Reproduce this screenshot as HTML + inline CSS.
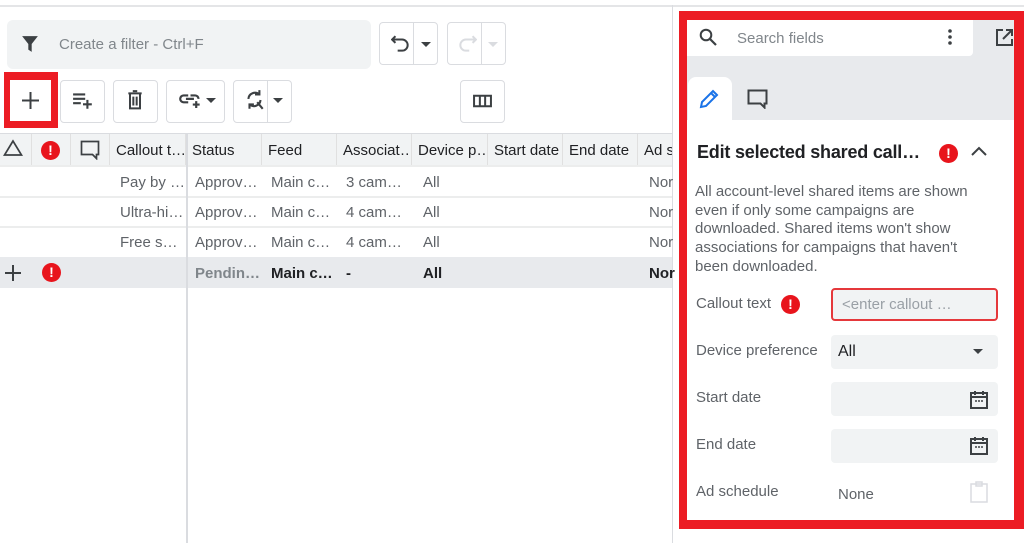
<!DOCTYPE html>
<html><head><meta charset="utf-8"><style>
*{box-sizing:border-box;margin:0;padding:0}
body{width:1024px;height:543px;overflow:hidden;background:#fff;font-family:"Liberation Sans",sans-serif;position:relative;color:#3c4043}
.a{position:absolute}
.btn{position:absolute;border:1px solid #dadce0;border-radius:4px;background:#fff}
.t{position:absolute;font-size:15px;white-space:nowrap}
.hd{position:absolute;top:134px;height:32px;background:#f1f3f4;border-right:1px solid #e0e0e0;font-size:15px;color:#202124;padding:8px 0 0 6px;white-space:nowrap;overflow:hidden}
.err{position:absolute;width:19px;height:19px;border-radius:50%;background:#e8141c;color:#fff;font-weight:bold;font-size:14px;text-align:center;line-height:19px}
.rl{position:absolute;left:0;width:672px;height:2px;background:#eceded}
.lab{position:absolute;left:696px;font-size:15px;color:#5f6368}
.fld{position:absolute;left:831px;width:167px;height:34px;background:#f1f3f4;border-radius:4px}
</style></head><body>
<div class="a" style="left:0;top:5px;width:1024px;height:2px;background:#e4e5e7"></div>
<div class="a" style="left:672px;top:5px;width:1px;height:538px;background:#dadce0"></div>
<!-- filter bar -->
<div class="a" style="left:7px;top:20px;width:364px;height:49px;background:#f1f3f4;border-radius:6px"></div>
<svg class="a" style="left:21px;top:35px" width="18" height="18" viewBox="0 0 16 16"><path d="M1 1h14l-5.5 7v7l-3-2V8z" fill="#3c4043"/></svg>
<div class="t" style="left:59px;top:36px;color:#80868b">Create a filter - Ctrl+F</div>
<svg class="a" style="left:449px;top:34px" width="20" height="20" viewBox="0 0 20 20"><circle cx="10" cy="10" r="8.5" fill="none" stroke="#3c4043" stroke-width="1.6"/><text x="10" y="15" font-size="13" text-anchor="middle" fill="#3c4043" font-family="Liberation Sans">?</text></svg>
<div class="btn" style="left:379px;top:22px;width:59px;height:43px"></div>
<div class="a" style="left:413px;top:23px;width:1px;height:41px;background:#dadce0"></div>
<svg class="a" style="left:391px;top:34px" width="20" height="20" viewBox="0 0 18 18"><path d="M4 2L1 5l3 3M1 5h9a5 5 0 0 1 0 10H6" fill="none" stroke="#3c4043" stroke-width="1.8"/></svg>
<div class="a" style="left:421px;top:42px;border:5px solid transparent;border-top:5px solid #3c4043"></div>
<div class="btn" style="left:447px;top:22px;width:59px;height:43px"></div>
<div class="a" style="left:481px;top:23px;width:1px;height:41px;background:#dadce0"></div>
<svg class="a" style="left:457px;top:34px" width="20" height="20" viewBox="0 0 18 18"><path d="M14 2l3 3-3 3M17 5H8a5 5 0 0 0 0 10h3" fill="none" stroke="#dadce0" stroke-width="1.8"/></svg>
<div class="a" style="left:488px;top:42px;border:5px solid transparent;border-top:5px solid #dadce0"></div>
<!-- toolbar -->
<div class="a" style="left:4px;top:72px;width:54px;height:56px;background:#ec1c24"></div>
<div class="a" style="left:10px;top:80px;width:41px;height:41px;background:#fff"></div>
<svg class="a" style="left:21px;top:91px" width="19" height="19" viewBox="0 0 19 19"><path d="M9.5 1v17M1 9.5h17" stroke="#3c4043" stroke-width="2"/></svg>
<div class="btn" style="left:60px;top:80px;width:45px;height:43px"></div>
<svg class="a" style="left:72px;top:91px" width="22" height="20" viewBox="0 0 20 18"><path d="M1 3h11M1 7h11M1 11h7M14 8v8M10 12h8" stroke="#3c4043" stroke-width="1.9" fill="none"/></svg>
<div class="btn" style="left:113px;top:80px;width:45px;height:43px"></div>
<svg class="a" style="left:127px;top:90px" width="16" height="20" viewBox="0 0 14 18"><path d="M1 3h12M5 1h4M2.5 3.5v13h9v-13M5.5 6v8M8.5 6v8" stroke="#3c4043" stroke-width="1.8" fill="none"/></svg>
<div class="btn" style="left:166px;top:80px;width:59px;height:43px"></div>
<svg class="a" style="left:179px;top:92px" width="23" height="16" viewBox="0 0 20 14"><path d="M8 3H4a3 3 0 0 0 0 6h4M10 3h4a3 3 0 0 1 3 3M6 6h7M15 8v6M12 11h6" stroke="#3c4043" stroke-width="1.9" fill="none"/></svg>
<div class="a" style="left:206px;top:98px;border:5px solid transparent;border-top:5px solid #3c4043"></div>
<div class="btn" style="left:233px;top:80px;width:59px;height:43px"></div>
<div class="a" style="left:267px;top:81px;width:1px;height:41px;background:#dadce0"></div>
<svg class="a" style="left:245px;top:89px" width="20" height="22" viewBox="0 0 18 20"><path d="M3 9a6 6 0 0 1 10-4M14 10a6 6 0 0 1-10 4M13 1v4h-4M4 18v-4h4M11 12l5 6" stroke="#3c4043" stroke-width="1.9" fill="none"/></svg>
<div class="a" style="left:273px;top:98px;border:5px solid transparent;border-top:5px solid #3c4043"></div>
<div class="btn" style="left:460px;top:80px;width:45px;height:43px"></div>
<svg class="a" style="left:473px;top:94px" width="19" height="14" viewBox="0 0 18 12"><path d="M1 1h16v10H1zM6.5 1v10M11.5 1v10" stroke="#3c4043" stroke-width="1.9" fill="none"/></svg>
<!-- table -->
<div class="a" style="left:0;top:133px;width:672px;height:1px;background:#dadce0"></div>
<div class="hd" style="left:0;width:32px;padding:5px 0 0 3px"><svg width="20" height="18" viewBox="0 0 20 18"><path d="M10 2L1.5 16h17z" fill="none" stroke="#3c4043" stroke-width="1.7"/></svg></div>
<div class="hd" style="left:32px;width:39px"></div>
<div class="err" style="left:41px;top:141px">!</div>
<div class="hd" style="left:71px;width:39px;padding:6px 0 0 9px"><svg width="20" height="20" viewBox="0 0 20 20"><path d="M1.5 1.5h17v13h-2v4l-4-4h-11z" fill="none" stroke="#3c4043" stroke-width="1.7"/></svg></div>
<div class="hd" style="left:110px;width:76px">Callout t…</div>
<div class="hd" style="left:186px;width:76px">Status</div>
<div class="hd" style="left:262px;width:75px">Feed</div>
<div class="hd" style="left:337px;width:75px">Associat…</div>
<div class="hd" style="left:412px;width:76px">Device p…</div>
<div class="hd" style="left:488px;width:75px">Start date</div>
<div class="hd" style="left:563px;width:75px">End date</div>
<div class="hd" style="left:638px;width:34px;border-right:0">Ad s</div>
<div class="rl" style="top:165px"></div>
<div class="rl" style="top:196px"></div>
<div class="rl" style="top:226px"></div>
<div class="a" style="left:0;top:257px;width:672px;height:31px;background:#e8eaed"></div>
<div class="a" style="left:186px;top:134px;width:2px;height:409px;background:#dadce0"></div>
<div class="t" style="left:120px;top:174px;color:#5f6368">Pay by …</div>
<div class="t" style="left:120px;top:204px;color:#5f6368">Ultra-hi…</div>
<div class="t" style="left:120px;top:234px;color:#5f6368">Free s…</div>
<div class="t" style="left:195px;top:174px;color:#5f6368">Approv…</div>
<div class="t" style="left:195px;top:204px;color:#5f6368">Approv…</div>
<div class="t" style="left:195px;top:234px;color:#5f6368">Approv…</div>
<div class="t" style="left:271px;top:174px;color:#5f6368">Main c…</div>
<div class="t" style="left:271px;top:204px;color:#5f6368">Main c…</div>
<div class="t" style="left:271px;top:234px;color:#5f6368">Main c…</div>
<div class="t" style="left:346px;top:174px;color:#5f6368">3 cam…</div>
<div class="t" style="left:346px;top:204px;color:#5f6368">4 cam…</div>
<div class="t" style="left:346px;top:234px;color:#5f6368">4 cam…</div>
<div class="t" style="left:423px;top:174px;color:#5f6368">All</div>
<div class="t" style="left:423px;top:204px;color:#5f6368">All</div>
<div class="t" style="left:423px;top:234px;color:#5f6368">All</div>
<div class="t" style="left:649px;top:174px;color:#5f6368">Nor</div>
<div class="t" style="left:649px;top:204px;color:#5f6368">Nor</div>
<div class="t" style="left:649px;top:234px;color:#5f6368">Nor</div>
<svg class="a" style="left:4px;top:264px" width="18" height="18" viewBox="0 0 18 18"><path d="M9 1v16M1 9h16" stroke="#3c4043" stroke-width="2"/></svg>
<div class="err" style="left:42px;top:263px">!</div>
<div class="t" style="left:195px;top:265px;color:#80868b;font-weight:bold">Pendin…</div>
<div class="t" style="left:271px;top:265px;color:#202124;font-weight:bold">Main c…</div>
<div class="t" style="left:346px;top:265px;color:#202124;font-weight:bold">-</div>
<div class="t" style="left:423px;top:265px;color:#202124;font-weight:bold">All</div>
<div class="t" style="left:649px;top:265px;color:#202124;font-weight:bold">Nor</div>
<!-- right panel -->
<div class="a" style="left:679px;top:11px;width:345px;height:518px;background:#ec1c24"></div>
<div class="a" style="left:687px;top:20px;width:327px;height:500px;background:#fff"></div>
<div class="a" style="left:687px;top:20px;width:327px;height:100px;background:#e8eaed"></div>
<div class="a" style="left:687px;top:20px;width:286px;height:36px;background:#fff;border-radius:0 0 4px 0"></div>
<svg class="a" style="left:699px;top:28px" width="19" height="19" viewBox="0 0 19 19"><circle cx="7" cy="7" r="5.3" fill="none" stroke="#3c4043" stroke-width="2"/><path d="M11 11l6 6" stroke="#3c4043" stroke-width="2.2"/></svg>
<div class="t" style="left:737px;top:30px;color:#80868b">Search fields</div>
<svg class="a" style="left:947px;top:28px" width="6" height="18" viewBox="0 0 6 18"><circle cx="3" cy="3" r="1.8" fill="#3c4043"/><circle cx="3" cy="9" r="1.8" fill="#3c4043"/><circle cx="3" cy="15" r="1.8" fill="#3c4043"/></svg>
<svg class="a" style="left:995px;top:28px" width="19" height="19" viewBox="0 0 19 19"><path d="M8 2H2v15h15v-6M11 2h6v6M17 2L8 11" fill="none" stroke="#3c4043" stroke-width="2"/></svg>
<div class="a" style="left:688px;top:77px;width:44px;height:44px;background:#fff;border-radius:8px 8px 0 0"></div>
<svg class="a" style="left:699px;top:89px" width="20" height="20" viewBox="0 0 20 20"><path d="M2 18l1-5L14 2l4 4L7 17z M12 4l4 4" fill="none" stroke="#1a73e8" stroke-width="2"/></svg>
<svg class="a" style="left:747px;top:89px" width="21" height="20" viewBox="0 0 21 20"><path d="M1.5 1.5h18v13h-2v4l-4-4h-12z" fill="none" stroke="#3c4043" stroke-width="2"/></svg>
<div class="t" style="left:697px;top:142px;font-size:18px;color:#202124;font-weight:bold;letter-spacing:-0.2px">Edit selected shared call…</div>
<div class="err" style="left:939px;top:144px">!</div>
<svg class="a" style="left:970px;top:145px" width="18" height="12" viewBox="0 0 18 12"><path d="M2 10l7-7 7 7" fill="none" stroke="#3c4043" stroke-width="2"/></svg>
<div class="a" style="left:695px;top:183px;width:290px;font-size:15px;line-height:18.7px;color:#5f6368">All account-level shared items are shown even if only some campaigns are downloaded. Shared items won't show associations for campaigns that haven't been downloaded.</div>
<div class="lab" style="top:295px">Callout text</div>
<div class="err" style="left:781px;top:295px">!</div>
<div class="a" style="left:831px;top:288px;width:167px;height:33px;border:2px solid #e5383b;border-radius:4px;background:#f1f3f4;font-size:15px;color:#9aa0a6;padding:6px 0 0 9px">&lt;enter callout …</div>
<div class="lab" style="top:342px">Device preference</div>
<div class="fld" style="top:335px"></div>
<div class="t" style="left:838px;top:343px;color:#202124;font-size:16px">All</div>
<div class="a" style="left:973px;top:349px;border:5px solid transparent;border-top:5px solid #3c4043"></div>
<div class="lab" style="top:389px">Start date</div>
<div class="fld" style="top:382px"></div>
<div class="lab" style="top:436px">End date</div>
<div class="fld" style="top:429px"></div>
<svg class="a" style="left:970px;top:390px" width="18" height="19" viewBox="0 0 18 19"><path d="M1 3h16v15H1zM1 7h16M5 1v4M13 1v4" fill="none" stroke="#3c4043" stroke-width="2"/><path d="M5 11h2M8 11h2M11 11h2" stroke="#3c4043" stroke-width="1.5"/></svg>
<svg class="a" style="left:970px;top:436px" width="18" height="19" viewBox="0 0 18 19"><path d="M1 3h16v15H1zM1 7h16M5 1v4M13 1v4" fill="none" stroke="#3c4043" stroke-width="2"/><path d="M5 11h2M8 11h2M11 11h2" stroke="#3c4043" stroke-width="1.5"/></svg>
<div class="lab" style="top:483px">Ad schedule</div>
<div class="t" style="left:838px;top:486px;color:#5f6368">None</div>
<svg class="a" style="left:970px;top:481px" width="18" height="22" viewBox="0 0 18 22"><path d="M1 3h16v18H1zM6 1h6v4H6z" fill="none" stroke="#dadce0" stroke-width="1.5"/></svg>
</body></html>
